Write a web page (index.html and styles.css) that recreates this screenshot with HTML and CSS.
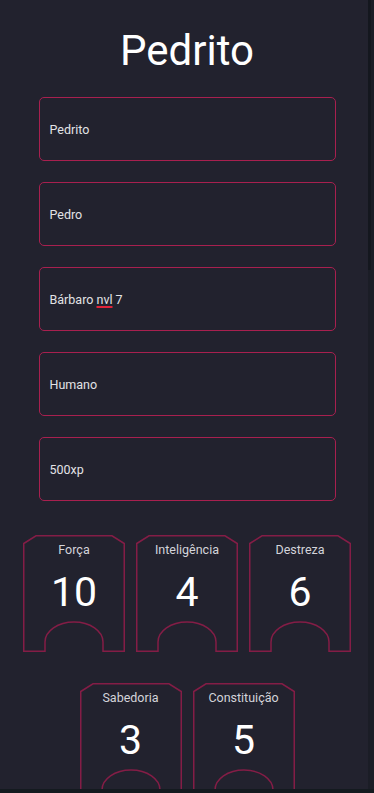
FILE: index.html
```html
<!DOCTYPE html>
<html lang="pt">
<head>
<meta charset="utf-8">
<title>Pedrito</title>
<link rel="stylesheet" href="styles.css">
</head>
<body>
<main class="sheet">
  <h1 class="title">Pedrito</h1>
  <div class="fields">
    <div class="field"><span class="field-text">Pedrito</span></div>
    <div class="field"><span class="field-text">Pedro</span></div>
    <div class="field"><span class="field-text">Bárbaro <span class="misspelled">nvl</span> 7</span></div>
    <div class="field"><span class="field-text">Humano</span></div>
    <div class="field"><span class="field-text">500xp</span></div>
  </div>
  <div class="stats">
    <div class="stat">
      <svg class="stat-frame" viewBox="0 0 102 117" width="102" height="117"><path d="M0.75,8.5 L13,0.75 H89 L101.25,8.5 V116.25 H80 V107 A29,20 0 0 0 22,107 V116.25 H0.75 Z"/></svg>
      <div class="stat-label">Força</div>
      <div class="stat-value">10</div>
    </div>
    <div class="stat">
      <svg class="stat-frame" viewBox="0 0 102 117" width="102" height="117"><path d="M0.75,8.5 L13,0.75 H89 L101.25,8.5 V116.25 H80 V107 A29,20 0 0 0 22,107 V116.25 H0.75 Z"/></svg>
      <div class="stat-label">Inteligência</div>
      <div class="stat-value">4</div>
    </div>
    <div class="stat">
      <svg class="stat-frame" viewBox="0 0 102 117" width="102" height="117"><path d="M0.75,8.5 L13,0.75 H89 L101.25,8.5 V116.25 H80 V107 A29,20 0 0 0 22,107 V116.25 H0.75 Z"/></svg>
      <div class="stat-label">Destreza</div>
      <div class="stat-value">6</div>
    </div>
    <div class="stat">
      <svg class="stat-frame" viewBox="0 0 102 117" width="102" height="117"><path d="M0.75,8.5 L13,0.75 H89 L101.25,8.5 V116.25 H80 V107 A29,20 0 0 0 22,107 V116.25 H0.75 Z"/></svg>
      <div class="stat-label">Sabedoria</div>
      <div class="stat-value">3</div>
    </div>
    <div class="stat">
      <svg class="stat-frame" viewBox="0 0 102 117" width="102" height="117"><path d="M0.75,8.5 L13,0.75 H89 L101.25,8.5 V116.25 H80 V107 A29,20 0 0 0 22,107 V116.25 H0.75 Z"/></svg>
      <div class="stat-label">Constituição</div>
      <div class="stat-value">5</div>
    </div>
  </div>
</main>
<div class="scrollbar"><div class="scrollbar-thumb"></div></div>
<div class="bottom-bar"></div>
</body>
</html>
```
FILE: styles.css
```css
html, body {
  margin: 0;
  padding: 0;
  background: #22222e;
  font-family: Roboto, "Liberation Sans", sans-serif;
  color: #ffffff;
  overflow: hidden;
}

.sheet {
  display: flex;
  flex-direction: column;
  align-items: center;
  padding-bottom: 40px;
}

.title {
  margin: 30px 0 0;
  font-size: 42px;
  line-height: 42px;
  font-weight: 400;
  color: #ffffff;
}

.fields {
  margin-top: 25px;
  display: flex;
  flex-direction: column;
  gap: 21px;
}

.field {
  box-sizing: border-box;
  width: 297px;
  height: 64px;
  border: 1.5px solid #a8204f;
  border-radius: 5px;
  padding: 0 10px;
  display: flex;
  align-items: center;
  font-size: 12.5px;
  color: #e2e2e6;
}

.field-text {
  white-space: pre;
}

.misspelled {
  text-decoration: underline solid #e0243a;
  text-decoration-thickness: 1.5px;
  text-underline-offset: 2px;
}

.stats {
  margin-top: 34px;
  width: 330px;
  display: flex;
  flex-wrap: wrap;
  justify-content: center;
  column-gap: 11px;
  row-gap: 31px;
}

.stat {
  position: relative;
  width: 102px;
  height: 117px;
  display: flex;
  flex-direction: column;
  align-items: center;
}

.stat-frame {
  position: absolute;
  left: 0;
  top: 0;
}

.stat-frame path {
  fill: none;
  stroke: #841d46;
  stroke-width: 1.5;
}

.stat-label {
  position: relative;
  margin-top: 7px;
  font-size: 12.5px;
  line-height: 16px;
  color: #d4d4da;
}

.stat-value {
  position: relative;
  margin-top: 14px;
  font-size: 41px;
  line-height: 41px;
  color: #ffffff;
}

.scrollbar {
  position: fixed;
  top: 0;
  right: 0;
  width: 6px;
  height: 100%;
  background: #1b1d26;
}

.scrollbar-thumb {
  width: 3px;
  height: 270px;
  background: #14171e;
}

.bottom-bar {
  position: fixed;
  left: 0;
  right: 0;
  bottom: 0;
  height: 4px;
  background: #141a1f;
}
```
